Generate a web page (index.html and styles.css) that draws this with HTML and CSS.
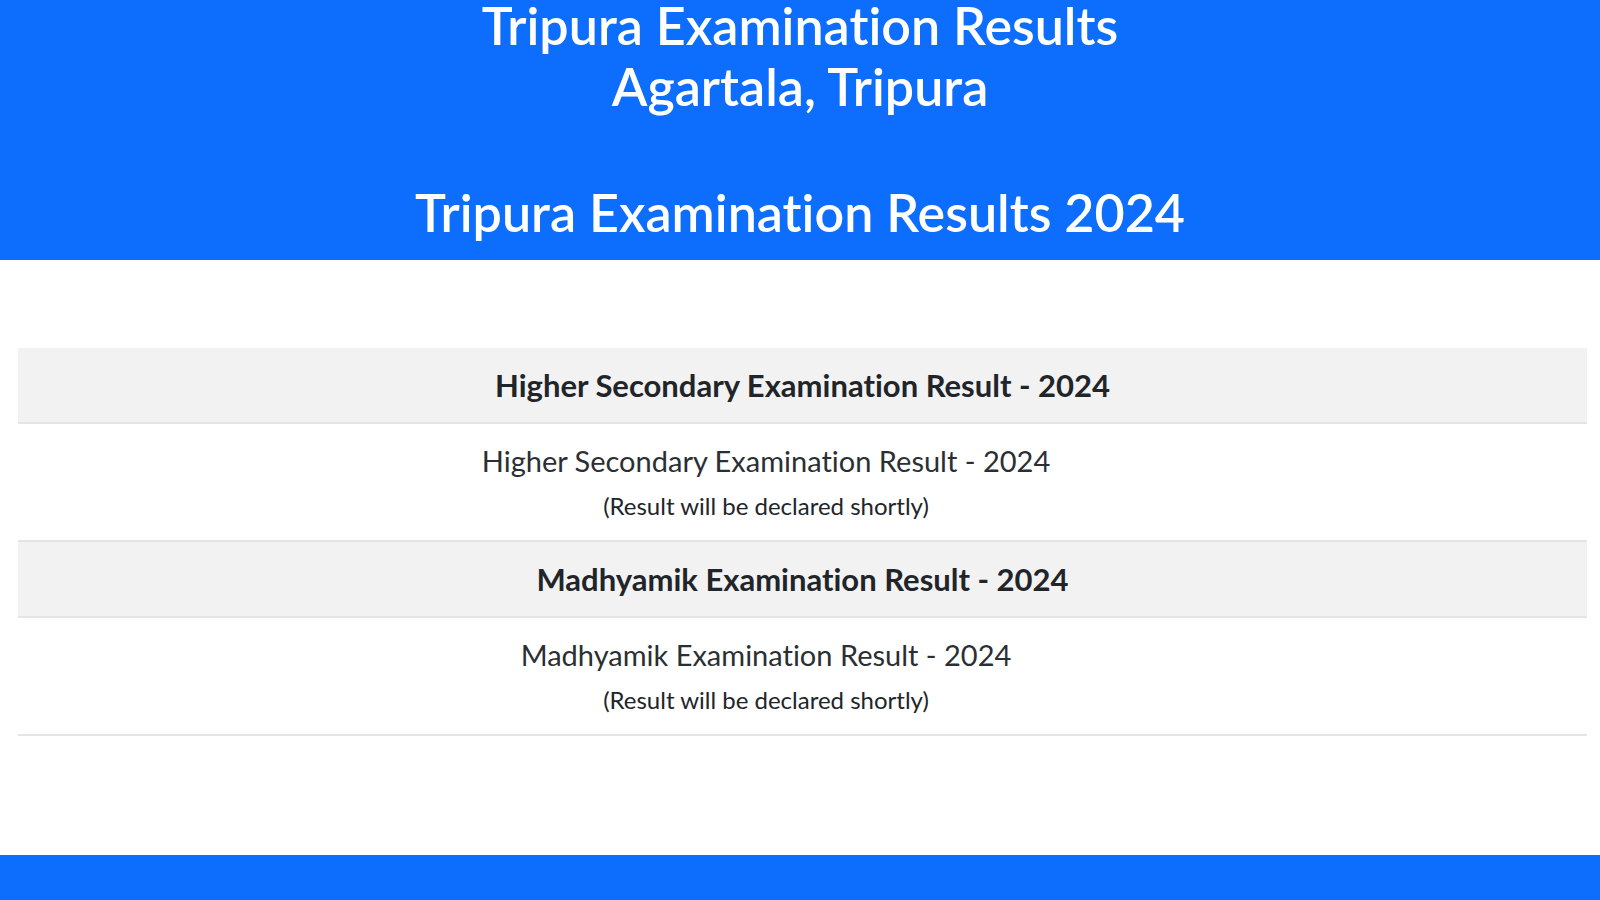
FILE: index.html
```html
<!DOCTYPE html>
<html lang="en">
<head>
    <meta charset="UTF-8">
    <meta name="viewport" content="width=device-width, initial-scale=1.0">
    <title>Tripura Examination Results 2024</title>
    <link rel="stylesheet" href="styles.css">
</head>
<body>
    <!-- Cabecera -->
    <header class="banner">
        <h1 class="site-title">Tripura Examination Results<br>Agartala, Tripura</h1>
        <h2 class="year-title">Tripura Examination Results 2024</h2>
    </header>

    <!-- Resultados -->
    <main class="results-wrap">
        <table class="results">
            <tr class="result-head">
                <th>Higher Secondary Examination Result - 2024</th>
            </tr>
            <tr class="result-body">
                <td>
                    <span class="result-name">Higher Secondary Examination Result - 2024</span>
                    <span class="result-note">(Result will be declared shortly)</span>
                </td>
            </tr>
            <tr class="result-head">
                <th>Madhyamik Examination Result - 2024</th>
            </tr>
            <tr class="result-body">
                <td>
                    <span class="result-name">Madhyamik Examination Result - 2024</span>
                    <span class="result-note">(Result will be declared shortly)</span>
                </td>
            </tr>
        </table>
    </main>

    <footer class="bottom-bar"></footer>
</body>
</html>
```

FILE: styles.css
```css
body {
    margin: 0;
    font-family: Lato, "Open Sans", sans-serif;
    font-variant-ligatures: none;
    color: #212529;
    background-color: #fff;
    overflow: hidden;
}
.banner {
    background-color: #0d6efd;
    color: #fff;
    text-align: center;
    height: 260px;
    overflow: hidden;
}
.site-title,
.year-title {
    font-size: 52px;
    font-weight: 600;
    line-height: 61px;
    margin: 0;
}
.site-title {
    margin-top: -5px;
}
.year-title {
    margin-top: 65px;
}
.results-wrap {
    margin: 88px 13px 0 18px;
}
.results {
    width: 100%;
    border-collapse: collapse;
}
.result-head th {
    background-color: #f2f2f2;
    border-bottom: 2px solid #e4e4e4;
    height: 74px;
    padding: 0 8px;
    font-size: 31px;
    font-weight: 700;
    text-align: center;
}
.result-body td {
    border-bottom: 2px solid #e4e4e4;
    padding: 17px 81px 18px 8px;
    text-align: center;
    vertical-align: top;
}
.result-name {
    display: block;
    font-size: 29px;
    line-height: 40px;
    color: #2b2f33;
}
.result-note {
    display: block;
    font-size: 24px;
    line-height: 32px;
    margin-top: 9px;
}
.bottom-bar {
    background-color: #0d6efd;
    height: 45px;
    margin-top: 119px;
}
```
